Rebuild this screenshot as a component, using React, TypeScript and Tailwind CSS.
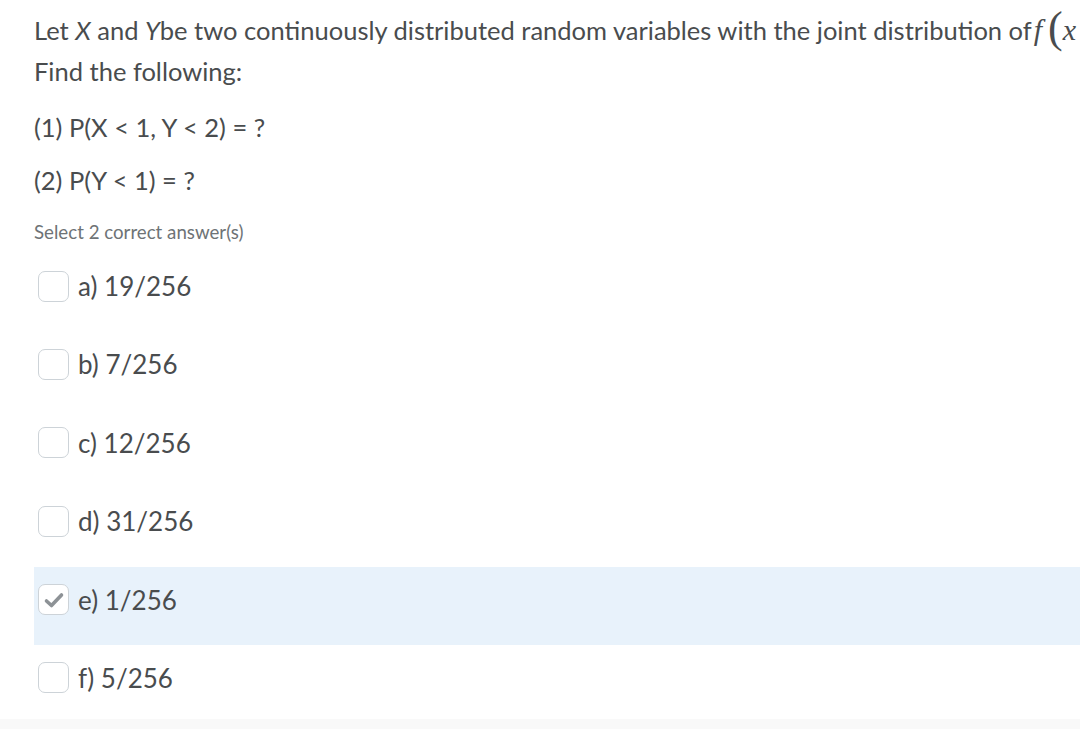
import React from 'react';

const options = [
  { id: 'a', label: 'a) 19/256', checked: false },
  { id: 'b', label: 'b) 7/256', checked: false },
  { id: 'c', label: 'c) 12/256', checked: false },
  { id: 'd', label: 'd) 31/256', checked: false },
  { id: 'e', label: 'e) 1/256', checked: true },
  { id: 'f', label: 'f) 5/256', checked: false },
];

const App = () => {
  return (
    <div className="w-[1080px] h-[729px] overflow-hidden bg-white text-[#494c4e] font-['Lato',sans-serif] flex flex-col">
      <div className="h-[719px] overflow-hidden pl-[34px]">
        {/* Question */}
        <div className="pt-[6px] h-[51px] text-[25.5px] leading-[40px] whitespace-nowrap">
          Let <i>X</i> and <i>Y</i>be two continuously distributed random variables with the joint distribution of
          <span className="font-['Liberation_Serif',serif] italic text-[30px] ml-[2px]">f</span>
          <span className="font-['Liberation_Serif',serif] text-[44px] leading-[40px] ml-[6px] relative top-[2px]">(</span>
          <span className="font-['Liberation_Serif',serif] italic text-[30px]">x</span>
        </div>
        <div className="text-[25.5px] leading-[40px]">Find the following:</div>
        <div className="text-[25.5px] leading-[40px] mt-[16px]">(1) P(X &lt; 1, Y &lt; 2) = ?</div>
        <div className="text-[25.5px] leading-[40px] mt-[13px]">(2) P(Y &lt; 1) = ?</div>
        <div className="text-[18.7px] text-[#6e7376] leading-[24px] mt-[20px]">Select 2 correct answer(s)</div>

        {/* Options */}
        <div className="mt-[9px] flex flex-col">
          {options.map((o) => (
            <div
              key={o.id}
              className={`h-[78.4px] shrink-0 pt-[17px] pl-[4px] ${o.checked ? 'bg-[#e8f2fb]' : ''}`}
            >
              <div className="flex items-center gap-[9px] h-[32px]">
                <div className="w-[31px] h-[31px] rounded-[7px] border border-[#cdd3d8] bg-white flex items-center justify-center">
                  {o.checked && (
                    <svg width="22" height="18" viewBox="0 0 22 18" fill="none">
                      <path d="M3.5 10 L8.5 14.5 L18.5 4" stroke="#8d9296" strokeWidth="3.6" strokeLinecap="round" strokeLinejoin="round" />
                    </svg>
                  )}
                </div>
                <span className="text-[26px] leading-none">{o.label}</span>
              </div>
            </div>
          ))}
        </div>
      </div>
      <div className="h-[10px] bg-[#f9f9f9]" />
    </div>
  );
};

export default App;
